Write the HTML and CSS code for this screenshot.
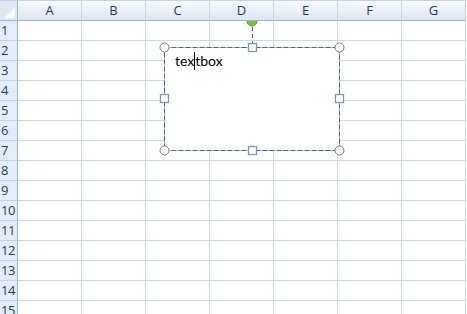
FILE: index.html
```html
<!DOCTYPE html>
<html>
<head>
<meta charset="utf-8">
<link rel="stylesheet" href="styles.css">
</head>
<body>
<div class="sheet">
  <div class="grid">
    <div class="corner"><div class="tri"></div></div>
    <div class="colhead">A</div>
    <div class="colhead">B</div>
    <div class="colhead">C</div>
    <div class="colhead">D</div>
    <div class="colhead">E</div>
    <div class="colhead">F</div>
    <div class="colhead">G</div>
  </div>
  <div id="rows"></div>

  <svg class="overlay" width="467" height="314" viewBox="0 0 467 314">
    <defs>
      <clipPath id="below-head"><rect x="0" y="21" width="467" height="293"/></clipPath>
    </defs>
    <circle cx="252" cy="21" r="5" fill="#7cc242" stroke="#5f9a2e" stroke-width="1" clip-path="url(#below-head)"/>
    <line x1="252.5" y1="27" x2="252.5" y2="43" stroke="#4f6a8a" stroke-width="1" stroke-dasharray="4 3"/>
    <rect x="164.5" y="47.5" width="175" height="103" fill="#fff" stroke="#c4c4c4" stroke-width="1"/>
    <rect x="164.5" y="47.5" width="175" height="103" fill="none" stroke="#46688f" stroke-width="1" stroke-dasharray="5 2"/>
    <circle cx="164.5" cy="47.5" r="4.5" fill="#fff" stroke="#7a7a7a"/>
    <circle cx="339.5" cy="47.5" r="4.5" fill="#fff" stroke="#7a7a7a"/>
    <circle cx="164.5" cy="150.5" r="4.5" fill="#fff" stroke="#7a7a7a"/>
    <circle cx="339.5" cy="150.5" r="4.5" fill="#fff" stroke="#7a7a7a"/>
    <rect x="248.5" y="43.5" width="8" height="8" fill="#fff" stroke="#7d97b5" stroke-width="1.3"/>
    <rect x="248.5" y="146.5" width="8" height="8" fill="#fff" stroke="#7d97b5" stroke-width="1.3"/>
    <rect x="160.5" y="94.5" width="8" height="8" fill="#fff" stroke="#7d97b5" stroke-width="1.3"/>
    <rect x="335.5" y="94.5" width="8" height="8" fill="#fff" stroke="#7d97b5" stroke-width="1.3"/>
  </svg>
  <div class="textbox"><span>tex</span><span class="caret"></span><span>tbox</span></div>
</div>
<script src="app.js"></script>
</body>
</html>
```

FILE: app.js
```js
var rows = document.getElementById('rows');
for (var i = 1; i <= 15; i++) {
  var r = document.createElement('div');
  r.className = 'grid row';
  var h = document.createElement('div');
  h.className = 'rowhead';
  h.textContent = i;
  r.appendChild(h);
  for (var c = 0; c < 7; c++) {
    var d = document.createElement('div');
    d.className = 'cell';
    r.appendChild(d);
  }
  rows.appendChild(r);
}
```

FILE: styles.css
```css
html, body {
  margin: 0;
  padding: 0;
  background: #fff;
  overflow: hidden;
}
.sheet {
  position: relative;
  width: 467px;
  height: 314px;
  overflow: hidden;
  font-family: "Open Sans", "Liberation Sans", sans-serif;
}
.grid {
  display: grid;
  grid-template-columns: 18px repeat(7, 64px);
  height: 21px;
}
.row {
  height: 20px;
}
.corner {
  box-sizing: border-box;
  background: #dfe8f5;
  border-right: 1px solid #9eb6ce;
  border-bottom: 1px solid #9eb6ce;
  border-top: 1px solid #c5d3e2;
  position: relative;
}
.tri {
  position: absolute;
  right: 2px;
  bottom: 2px;
  width: 0;
  height: 0;
  border-left: 11px solid transparent;
  border-bottom: 11px solid #fbfcfe;
}
.colhead {
  box-sizing: border-box;
  background: linear-gradient(#f9fcfd 0%, #e8eef7 55%, #dde6f1 100%);
  border-top: 1px solid #c5d3e2;
  border-right: 1px solid #c5d2e3;
  border-bottom: 1px solid #9eb6ce;
  color: #1f3c61;
  font-size: 13px;
  line-height: 19px;
  text-align: center;
}
.rowhead {
  box-sizing: border-box;
  background: #e4ecf7;
  border-right: 1px solid #9eb6ce;
  border-bottom: 1px solid #c5d2e3;
  color: #1f3c61;
  font-size: 13px;
  line-height: 19px;
  padding-left: 1px;
  letter-spacing: -0.5px;
  white-space: nowrap;
}
.cell {
  box-sizing: border-box;
  border-right: 1px solid #d0d7e5;
  border-bottom: 1px solid #d0d7e5;
}
.overlay {
  position: absolute;
  left: 0;
  top: 0;
}
.textbox {
  position: absolute;
  left: 175px;
  top: 52px;
  font-family: "Lato", "Open Sans", sans-serif;
  font-size: 14px;
  line-height: 18px;
  color: #000;
  display: flex;
  align-items: flex-start;
}
.caret {
  width: 1px;
  height: 18px;
  background: #000;
}
```
